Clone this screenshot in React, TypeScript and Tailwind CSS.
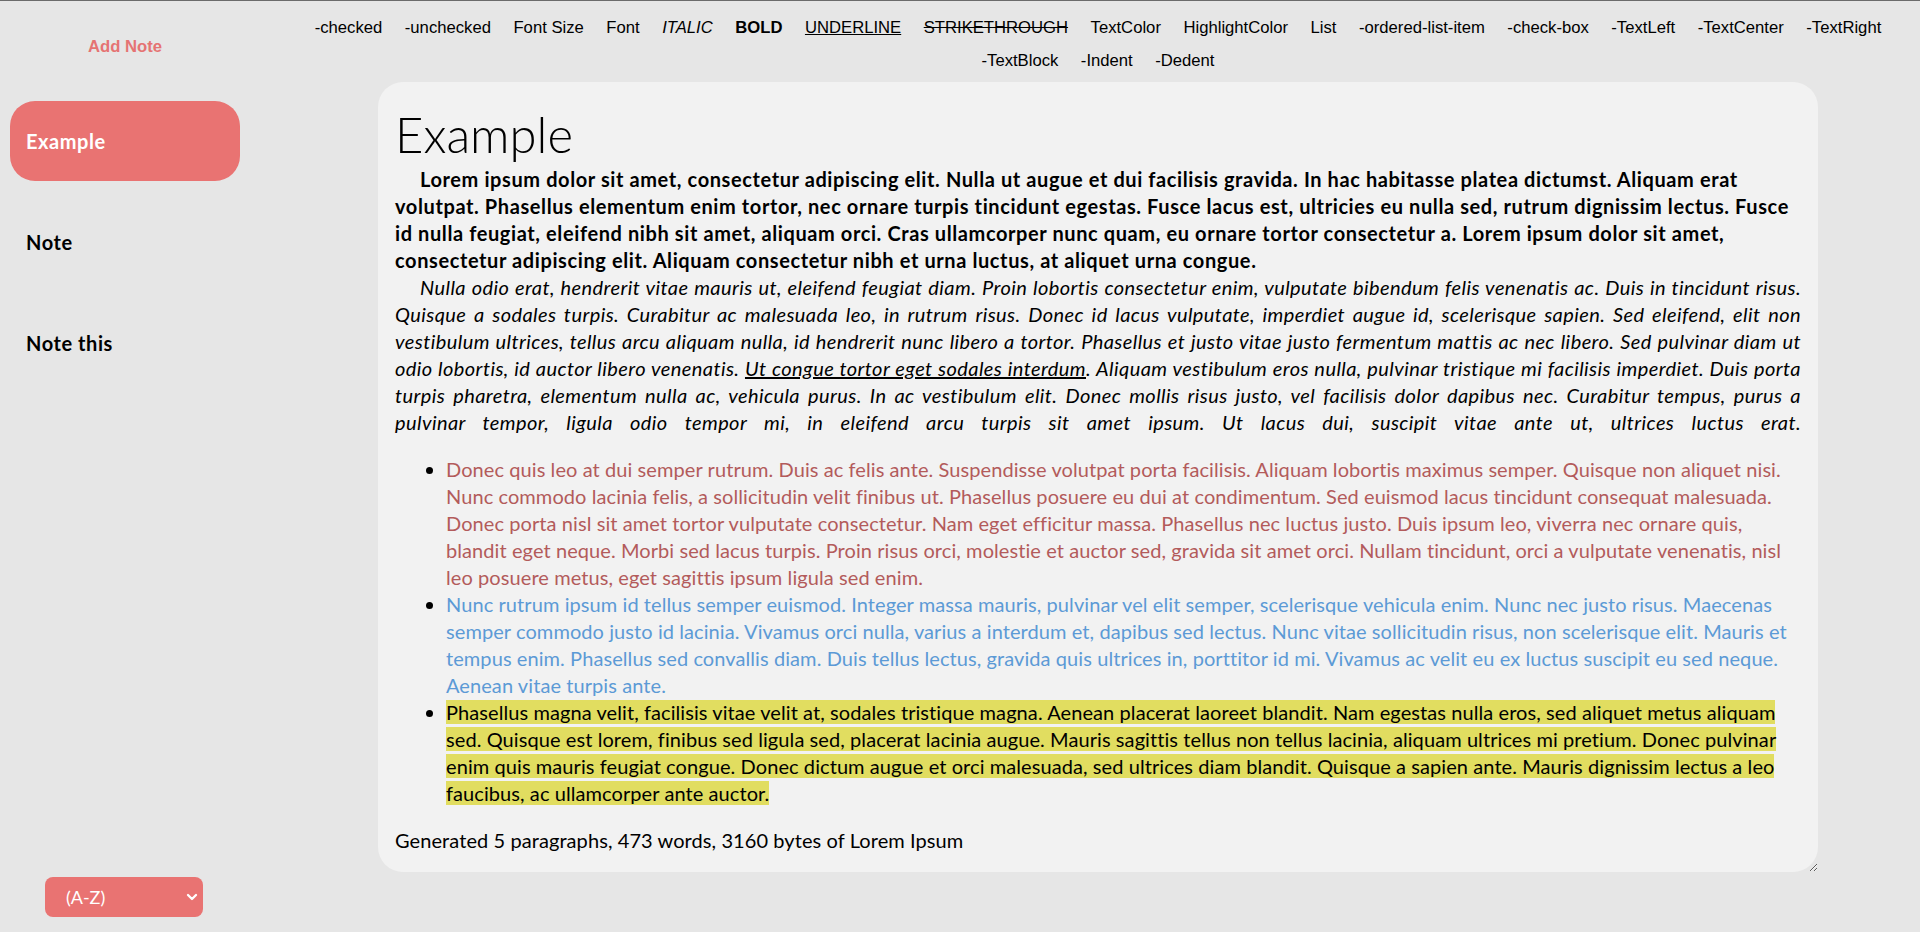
import { ChevronDown } from 'lucide-react';

const tools: { label: string; cls?: string }[] = [
    { label: '-checked' },
    { label: '-unchecked' },
    { label: 'Font Size' },
    { label: 'Font' },
    { label: 'ITALIC', cls: 'italic' },
    { label: 'BOLD', cls: 'font-bold' },
    { label: 'UNDERLINE', cls: 'underline' },
    { label: 'STRIKETHROUGH', cls: 'line-through' },
    { label: 'TextColor' },
    { label: 'HighlightColor' },
    { label: 'List' },
    { label: '-ordered-list-item' },
    { label: '-check-box' },
    { label: '-TextLeft' },
    { label: '-TextCenter' },
    { label: '-TextRight' },
    { label: '-TextBlock' },
    { label: '-Indent' },
    { label: '-Dedent' },
];

const notes = ['Example', 'Note', 'Note this'];

function Sidebar() {
    return (
        <aside className="w-[250px] shrink-0 h-full flex flex-col">
            {/* Add note */}
            <div className="h-[90px] flex items-center justify-center">
                <button className="font-['Liberation_Sans',sans-serif] font-bold text-[16.67px] text-[#e57373]">
                    Add Note
                </button>
            </div>

            {/* Notes list */}
            <div className="flex flex-col gap-[21px] px-[10px] pt-[10px]">
                {notes.map((n, i) => (
                    <div
                        key={n}
                        className={`h-[80px] flex items-center px-[16px] rounded-[25px] text-[20px] font-bold tracking-[0.56px] ${
                            i === 0 ? 'bg-[#e97372] text-white' : 'text-black'
                        }`}
                    >
                        {n}
                    </div>
                ))}
            </div>

            {/* Sort */}
            <div className="mt-auto mb-[15px] ml-[45px] relative w-[158px] h-[40px]">
                <select className="appearance-none w-full h-full rounded-[8px] bg-[#e97372] text-white text-[18px] pl-[21px] outline-none">
                    <option>(A-Z)</option>
                </select>
                <ChevronDown
                    className="absolute right-[3px] top-[12px] w-[16px] h-[16px] text-white pointer-events-none"
                    strokeWidth={3.5}
                />
            </div>
        </aside>
    );
}

function Toolbar() {
    return (
        <div className="flex flex-wrap justify-center gap-x-[7.5px] pt-[10px] font-['Liberation_Sans',sans-serif] text-[16.67px] text-black">
            {tools.map(t => (
                <button key={t.label} className={`h-[33px] px-[7.5px] ${t.cls ?? ''}`}>
                    {t.label}
                </button>
            ))}
        </div>
    );
}

function Editor() {
    return (
        <div className="mt-[5px] mx-auto w-[1440px] h-[790px] bg-[#f2f2f2] rounded-[25px] px-[17px] pt-[20px] pb-[4px] overflow-auto resize text-black text-[20px] leading-[27px]">
            <h1 className="text-[49px] font-light leading-[64px]">Example</h1>

            <p className="indent-[25px] font-bold tracking-[0.6px]">
                Lorem ipsum dolor sit amet, consectetur adipiscing elit. Nulla ut augue et dui facilisis gravida. In hac habitasse
                platea dictumst. Aliquam erat volutpat. Phasellus elementum enim tortor, nec ornare turpis tincidunt egestas. Fusce
                lacus est, ultricies eu nulla sed, rutrum dignissim lectus. Fusce id nulla feugiat, eleifend nibh sit amet, aliquam
                orci. Cras ullamcorper nunc quam, eu ornare tortor consectetur a. Lorem ipsum dolor sit amet, consectetur adipiscing
                elit. Aliquam consectetur nibh et urna luctus, at aliquet urna congue.
            </p>

            <p className="indent-[25px] italic text-justify [text-align-last:justify] tracking-[0.42px]">
                Nulla odio erat, hendrerit vitae mauris ut, eleifend feugiat diam. Proin lobortis consectetur enim, vulputate
                bibendum felis venenatis ac. Duis in tincidunt risus. Quisque a sodales turpis. Curabitur ac malesuada leo, in rutrum
                risus. Donec id lacus vulputate, imperdiet augue id, scelerisque sapien. Sed eleifend, elit non vestibulum ultrices,
                tellus arcu aliquam nulla, id hendrerit nunc libero a tortor. Phasellus et justo vitae justo fermentum mattis ac nec
                libero. Sed pulvinar diam ut odio lobortis, id auctor libero venenatis.{' '}
                <span className="underline">Ut congue tortor eget sodales interdum</span>. Aliquam vestibulum eros nulla, pulvinar
                tristique mi facilisis imperdiet. Duis porta turpis pharetra, elementum nulla ac, vehicula purus. In ac vestibulum
                elit. Donec mollis risus justo, vel facilisis dolor dapibus nec. Curabitur tempus, purus a pulvinar tempor, ligula
                odio tempor mi, in eleifend arcu turpis sit amet ipsum. Ut lacus dui, suscipit vitae ante ut, ultrices luctus erat.
            </p>

            <ul className="list-disc pl-[51px] my-[20px] tracking-[0.08px]">
                <li className="text-[#b35b5b] marker:text-black">
                    Donec quis leo at dui semper rutrum. Duis ac felis ante. Suspendisse volutpat porta facilisis. Aliquam lobortis
                    maximus semper. Quisque non aliquet nisi. Nunc commodo lacinia felis, a sollicitudin velit finibus ut. Phasellus
                    posuere eu dui at condimentum. Sed euismod lacus tincidunt consequat malesuada. Donec porta nisl sit amet tortor
                    vulputate consectetur. Nam eget efficitur massa. Phasellus nec luctus justo. Duis ipsum leo, viverra nec ornare
                    quis, blandit eget neque. Morbi sed lacus turpis. Proin risus orci, molestie et auctor sed, gravida sit amet orci.
                    Nullam tincidunt, orci a vulputate venenatis, nisl leo posuere metus, eget sagittis ipsum ligula sed enim.
                </li>
                <li className="text-[#5c9ad6] marker:text-black">
                    Nunc rutrum ipsum id tellus semper euismod. Integer massa mauris, pulvinar vel elit semper, scelerisque vehicula
                    enim. Nunc nec justo risus. Maecenas semper commodo justo id lacinia. Vivamus orci nulla, varius a interdum et,
                    dapibus sed lectus. Nunc vitae sollicitudin risus, non scelerisque elit. Mauris et tempus enim. Phasellus sed
                    convallis diam. Duis tellus lectus, gravida quis ultrices in, porttitor id mi. Vivamus ac velit eu ex luctus
                    suscipit eu sed neque. Aenean vitae turpis ante.
                </li>
                <li>
                    <span className="bg-[#e1dd60]">
                        Phasellus magna velit, facilisis vitae velit at, sodales tristique magna. Aenean placerat laoreet blandit. Nam
                        egestas nulla eros, sed aliquet metus aliquam sed. Quisque est lorem, finibus sed ligula sed, placerat lacinia
                        augue. Mauris sagittis tellus non tellus lacinia, aliquam ultrices mi pretium. Donec pulvinar enim quis mauris
                        feugiat congue. Donec dictum augue et orci malesuada, sed ultrices diam blandit. Quisque a sapien ante. Mauris
                        dignissim lectus a leo faucibus, ac ullamcorper ante auctor.
                    </span>
                </li>
            </ul>

            <p className="tracking-[0.08px]">Generated 5 paragraphs, 473 words, 3160 bytes of Lorem Ipsum</p>
        </div>
    );
}

export default function App() {
    return (
        <div className="h-screen w-full bg-[#e6e6e6] border-t border-[#6b6b6b] flex font-['Lato',sans-serif] overflow-hidden">
            <Sidebar />
            <main className="flex-1 pl-[26px] flex flex-col">
                <Toolbar />
                <Editor />
            </main>
        </div>
    );
}
